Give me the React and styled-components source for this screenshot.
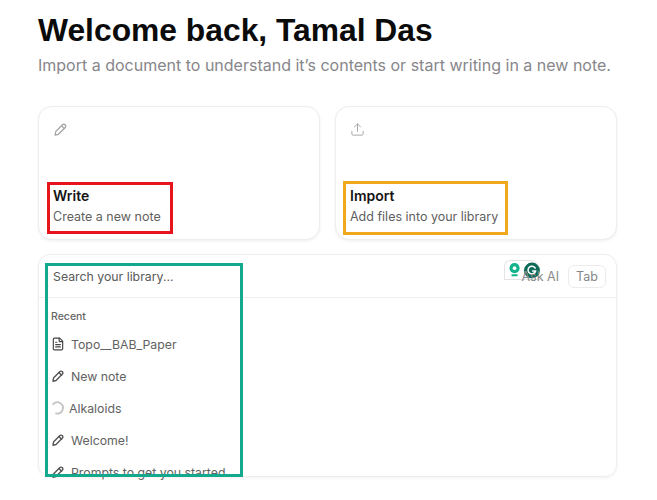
import React from 'react';
import styled, { createGlobalStyle } from 'styled-components';
import { Upload, FileText } from 'lucide-react';

const GlobalStyle = createGlobalStyle`
  html, body {
    margin: 0;
    background: #fff;
    font-family: Inter, "Liberation Sans", sans-serif;
  }
`;

const Page = styled.main`
  width: 657px;
  height: 500px;
  box-sizing: border-box;
  padding: 12px 40px 0 38px;
  overflow: hidden;
`;

const Title = styled.h1`
  margin: 0;
  font-family: "Liberation Sans", Arial, sans-serif;
  font-size: 31.8px;
  line-height: 36px;
  font-weight: 700;
  color: #0b0b0b;
`;

const Subtitle = styled.p`
  margin: 6px 0 0;
  font-size: 16px;
  line-height: 22px;
  color: #87868a;
  white-space: nowrap;
`;

const Cards = styled.div`
  display: grid;
  grid-template-columns: 282px 282px;
  gap: 15px;
  margin-top: 30px;
`;

const Card = styled.section`
  position: relative;
  height: 134px;
  box-sizing: border-box;
  padding: 15px 14px 13px;
  border: 1px solid #eeeeee;
  border-radius: 14px;
  background: #fff;
  box-shadow: 0 1px 3px rgba(0, 0, 0, 0.07);
  display: flex;
  flex-direction: column;
  justify-content: space-between;
  color: #a3a3a3;
`;

const CardTitle = styled.div`
  font-size: 14px;
  line-height: 20px;
  font-weight: 600;
  color: #141414;
`;

const CardText = styled.div`
  margin-top: 2px;
  font-size: 12.5px;
  line-height: 18px;
  color: #5f5f5f;
`;

const Marker = styled.div`
  position: absolute;
  box-sizing: border-box;
  border: 3px solid ${({ $color }) => $color};
  top: ${({ $top }) => $top}px;
  left: ${({ $left }) => $left}px;
  width: ${({ $width }) => $width}px;
  height: ${({ $height }) => $height}px;
  pointer-events: none;
`;

const Panel = styled.section`
  position: relative;
  margin-top: 14px;
  height: 223px;
  box-sizing: border-box;
  border: 1px solid #eeeeee;
  border-radius: 12px;
  box-shadow: 0 1px 3px rgba(0, 0, 0, 0.06);
`;

const SearchBar = styled.div`
  height: 43px;
  box-sizing: border-box;
  padding: 0 10px 0 14px;
  display: flex;
  align-items: center;
  justify-content: space-between;
  border-bottom: 1px solid #efefef;
`;

const SearchLabel = styled.span`
  font-size: 12.3px;
  color: #5a5a5a;
`;

const AskGroup = styled.div`
  position: relative;
  z-index: 1;
  display: flex;
  align-items: center;
  gap: 9px;
  margin-top: 1px;
`;

const AskLabel = styled.span`
  font-size: 12.5px;
  color: #8a8a8a;
`;

const Key = styled.span`
  width: 38px;
  height: 23px;
  box-sizing: border-box;
  display: flex;
  align-items: center;
  justify-content: center;
  border: 1px solid #ececec;
  border-radius: 6px;
  font-size: 12.5px;
  color: #858585;
`;

const GrammarlyBadge = styled.div`
  position: absolute;
  top: 5px;
  left: 465px;
  width: 36px;
  height: 20px;
  box-sizing: border-box;
  border: 1px solid #e4e4e4;
  border-right: 0;
  border-radius: 6px 10px 0 0;
  display: flex;
  align-items: center;
  padding-left: 3px;
  gap: 3px;
`;

const List = styled.div`
  height: 178px;
  overflow: hidden;
  padding: 12px 0 0 12px;
`;

const ListHeading = styled.div`
  font-size: 10.5px;
  line-height: 14px;
  font-weight: 500;
  color: #666;
  margin-bottom: 4px;
`;

const Row = styled.div`
  height: 32px;
  display: flex;
  align-items: center;
  gap: ${({ $gap }) => $gap}px;
  font-size: 12.3px;
  color: #626262;
  white-space: nowrap;
  svg { flex: none; }
`;

function PencilIcon({ size = 14, color = '#555', width = 1.4 }) {
  return (
    <svg width={size} height={size} viewBox="0 0 14 14" fill="none" stroke={color} strokeWidth={width} strokeLinejoin="round" strokeLinecap="round">
      <path d="M2 12.2l.5-3.2 6.4-6.4a1.6 1.6 0 0 1 2.3 0l.2.2a1.6 1.6 0 0 1 0 2.3L5 11.5z" />
      <path d="M8 3.6l2.6 2.6" />
    </svg>
  );
}

function Spinner() {
  return (
    <svg width="14" height="14" viewBox="0 0 14 14" fill="none">
      <path d="M2.2 3.2A5.6 5.6 0 1 1 5 12.4" stroke="#c4c4c4" strokeWidth="1.8" strokeLinecap="round" />
    </svg>
  );
}

function GrammarlyIcons() {
  return (
    <>
      <svg width="14" height="16" viewBox="0 0 14 16">
        <circle cx="7" cy="6" r="5.4" fill="#12b28c" />
        <circle cx="7" cy="6" r="2" fill="#fff" />
        <rect x="3.6" y="12.6" width="6.8" height="2" rx="1" fill="#12b28c" />
      </svg>
      <svg width="17" height="17" viewBox="0 0 17 17">
        <circle cx="8.5" cy="8.5" r="8.5" fill="#0d6b58" />
        <path d="M12 6a4.1 4.1 0 1 0 .4 3H9.2" fill="none" stroke="#fff" strokeWidth="1.6" strokeLinecap="round" />
      </svg>
    </>
  );
}

const recent = [
  { name: 'Topo__BAB_Paper', icon: <FileText size={14} color="#444" />, gap: 6 },
  { name: 'New note', icon: <PencilIcon />, gap: 6 },
  { name: 'Alkaloids', icon: <Spinner />, gap: 4 },
  { name: 'Welcome!', icon: <PencilIcon />, gap: 6 },
  { name: 'Prompts to get you started', icon: <PencilIcon />, gap: 6 },
];

export default function App() {
  return (
    <Page>
      <GlobalStyle />
      <Title>Welcome back, Tamal Das</Title>
      <Subtitle>Import a document to understand it’s contents or start writing in a new note.</Subtitle>

      <Cards>
        <Card>
          <PencilIcon size={15} color="#a3a3a3" width={1.2} />
          <div>
            <CardTitle>Write</CardTitle>
            <CardText>Create a new note</CardText>
          </div>
          <Marker $color="#e8141c" $top={75} $left={8} $width={126} $height={52} />
        </Card>
        <Card>
          <Upload size={15} strokeWidth={1.5} />
          <div>
            <CardTitle>Import</CardTitle>
            <CardText>Add files into your library</CardText>
          </div>
          <Marker $color="#f0a81e" $top={74} $left={7} $width={165} $height={54} />
        </Card>
      </Cards>

      <Panel>
        <SearchBar>
          <SearchLabel>Search your library...</SearchLabel>
          <AskGroup>
            <AskLabel>Ask AI</AskLabel>
            <Key>Tab</Key>
          </AskGroup>
        </SearchBar>
        <GrammarlyBadge>
          <GrammarlyIcons />
        </GrammarlyBadge>
        <List>
          <ListHeading>Recent</ListHeading>
          {recent.map(item => (
            <Row key={item.name} $gap={item.gap}>
              {item.icon}
              {item.name}
            </Row>
          ))}
        </List>
        <Marker $color="#14a98c" $top={8} $left={6} $width={198} $height={214} />
      </Panel>
    </Page>
  );
}
